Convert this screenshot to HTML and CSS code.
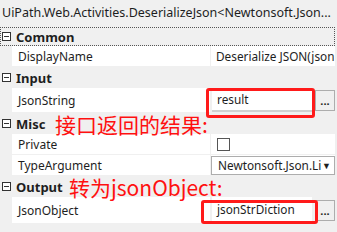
FILE: index.html
```html
<!DOCTYPE html>
<html>
<head>
  <title>Properties</title>
  <link rel="stylesheet" href="styles.css">
</head>
<body>
  <div class="title">UiPath.Web.Activities.DeserializeJson&lt;Newtonsoft.Json...</div>

  <div class="grid">
    <div class="cat focus"><span class="toggle"></span>Common</div>
    <div class="prop">
      <div class="name">DisplayName</div>
      <div class="val">Deserialize JSON(json</div>
    </div>

    <div class="cat"><span class="toggle"></span>Input</div>
    <div class="prop tall">
      <div class="name">JsonString</div>
      <div class="val edit">
        <div class="textbox">result</div>
        <div class="dots">...</div>
      </div>
    </div>

    <div class="cat"><span class="toggle"></span>Misc</div>
    <div class="prop">
      <div class="name">Private</div>
      <div class="val"><span class="check"></span></div>
    </div>
    <div class="prop">
      <div class="name">TypeArgument</div>
      <div class="val combo-cell">
        <div class="combo"><span>Newtonsoft.Json.Li</span><span class="arrow">&#9660;</span></div>
      </div>
    </div>

    <div class="cat"><span class="toggle"></span>Output</div>
    <div class="prop tall2">
      <div class="name">JsonObject</div>
      <div class="val edit">
        <div class="textbox">jsonStrDiction</div>
        <div class="dots">...</div>
      </div>
    </div>
  </div>

  <!-- annotations drawn over the grid -->
  <div class="note note-input">接口返回的结果:</div>
  <div class="note note-output">转为jsonObject:</div>
  <div class="mark mark-input"></div>
  <div class="mark mark-output"></div>
</body>
</html>
```

FILE: styles.css
```css
body {
  margin: 0;
  width: 337px;
  height: 232px;
  overflow: hidden;
  position: relative;
  background-color: #f0f0f0;
  font-family: "Noto Sans", "Open Sans", sans-serif;
  font-size: 12px;
  color: #1e1e1e;
}
.title {
  height: 27px;
  line-height: 25px;
  padding-left: 2px;
  white-space: nowrap;
  font-size: 12.5px;
}
.grid {
  width: 335px;
  display: flex;
  flex-direction: column;
}
.cat {
  height: 21px;
  display: flex;
  align-items: center;
  font-weight: bold;
  font-size: 13px;
  box-sizing: border-box;
}
.cat.focus {
  height: 19px;
  border: 1px dotted #555;
}
.toggle {
  width: 9px;
  height: 9px;
  border: 1px solid #333;
  box-sizing: border-box;
  margin: 0 5px 0 2px;
  position: relative;
  background: #fff;
}
.focus .toggle {
  margin-left: 1px;
}
.toggle::after {
  content: "";
  position: absolute;
  left: 1px;
  right: 1px;
  top: 3px;
  height: 1px;
  background: #333;
}
.prop {
  height: 21px;
  display: flex;
  padding-left: 12px;
  gap: 1px;
  border-bottom: 1px solid #f0f0f0;
  box-sizing: border-box;
}
.prop.tall {
  height: 25px;
}
.prop.tall2 {
  height: 27px;
}
.name {
  width: 192px;
  background: #fff;
  padding-left: 6px;
  display: flex;
  align-items: center;
}
.val {
  flex: 1;
  min-width: 0;
  background: #fff;
  padding-left: 5px;
  display: flex;
  align-items: center;
  white-space: nowrap;
  overflow: hidden;
  font-size: 11.8px;
}
.val.edit {
  padding-left: 1px;
  gap: 3px;
  background: #f0f0f0;
}
.textbox {
  flex: 1;
  height: 100%;
  background: #fff;
  border-bottom: 2px solid #d0d0d0;
  box-sizing: border-box;
  padding-left: 5px;
  display: flex;
  align-items: center;
}
.dots {
  width: 20px;
  height: 21px;
  border: 1px solid #adadad;
  box-sizing: border-box;
  background: #f0f0f0;
  font-weight: bold;
  font-size: 11px;
  text-align: center;
  line-height: 19px;
}
.check {
  width: 13px;
  height: 13px;
  border: 1px solid #555;
  box-sizing: border-box;
  margin-left: 1px;
}
.val.combo-cell {
  padding-left: 0;
}
.combo {
  flex: 1;
  height: 19px;
  border: 1px solid #adadad;
  box-sizing: border-box;
  display: flex;
  align-items: center;
  justify-content: space-between;
  padding: 0 3px 0 6px;
  background: #fff;
}
.arrow {
  font-size: 9px;
}
.note {
  position: absolute;
  color: #ff1010;
  font-family: "Noto Sans CJK SC", sans-serif;
  font-size: 21px;
  line-height: 22px;
  white-space: nowrap;
}
.note-input {
  left: 55px;
  top: 113px;
}
.note-output {
  left: 69px;
  top: 176px;
}
.mark {
  position: absolute;
  border: 3px solid #ff1a1a;
  border-radius: 3px;
  box-sizing: border-box;
}
.mark-input {
  left: 206px;
  top: 88px;
  width: 109px;
  height: 30px;
}
.mark-output {
  left: 201px;
  top: 200px;
  width: 117px;
  height: 24px;
}
```
